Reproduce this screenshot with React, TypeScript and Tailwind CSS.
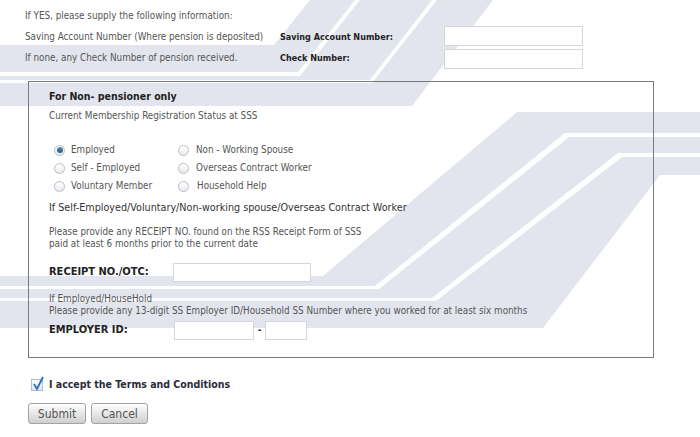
import React from "react";

const F = { fontFamily: '"DejaVu Sans Condensed", "DejaVu Sans", sans-serif' };

function Radio({ checked = false }: { checked?: boolean }) {
  return (
    <span className="inline-flex h-[11px] w-[11px] shrink-0 items-center justify-center rounded-full border border-[#b9bcc4] bg-gradient-to-b from-[#ffffff] to-[#e9eaee]">
      {checked && <span className="h-[6px] w-[6px] rounded-full bg-gradient-to-b from-[#5d8fb8] to-[#1f5a87]" />}
    </span>
  );
}

function Input({ w }: { w: string }) {
  return <div className={`${w} h-[19px] border border-[#d4d6dc] bg-white`} />;
}

function Background() {
  return (
    <svg className="absolute inset-0" width="700" height="437" viewBox="0 0 700 437">
      <g fill="#e3e5ee">
        <polygon points="0,45 274,45 310,0 355,0 298,72 0,72" />
        <polygon points="0,76 300,76 360,0 432,0 370,80 0,80" />
        <polygon points="0,83 372,83 437,0 493,0 412,106 0,106" />
        <polygon points="0,276 323,276 517,112 700,112 700,133 565,133 375,286 0,286" />
        <polygon points="0,289 379,289 569,137 700,137 700,153 618,153 432,298 0,298" />
        <polygon points="0,301 436,301 622,157 700,157 700,175 660,175 543,328 0,328" />
      </g>
    </svg>
  );
}

export default function App() {
  return (
    <div className="relative h-[437px] w-[700px] overflow-hidden bg-white" style={F}>
      <Background />
      <div className="relative pl-[25px] pt-[6px] text-[9.8px] text-[#555]">
        <div className="flex h-[21px] items-center">If YES, please supply the following information:</div>
        <div className="flex h-[21px] items-center">
          <span className="w-[255px]">Saving Account Number (Where pension is deposited)</span>
          <span className="w-[164px] text-[9px] font-bold text-[#222]">Saving Account Number:</span>
          <div className="-mt-[4px] h-[20px] w-[139px] border border-[#d4d6dc] bg-white" />
        </div>
        <div className="flex h-[21px] items-center">
          <span className="w-[255px]">If none, any Check Number of pension received.</span>
          <span className="w-[164px] text-[9px] font-bold text-[#222]">Check Number:</span>
          <div className="h-[20px] w-[139px] border border-[#d4d6dc] bg-white" />
        </div>

        <div className="ml-[3px] mt-[12px] h-[277px] w-[626px] border border-[#7a7a7a] pl-[20px]">
          <div className="mt-[7px] flex h-[16px] items-center text-[10.5px] font-bold text-[#222]">For Non- pensioner only</div>
          <div className="mt-[4px] flex h-[14px] items-center">Current Membership Registration Status at SSS</div>
          <div className="mt-[18px] flex">
            <div className="flex w-[129px] flex-col pl-[5px]">
              <div className="flex h-[18px] items-center gap-[6px]"><Radio checked />Employed</div>
              <div className="flex h-[18px] items-center gap-[6px]"><Radio />Self - Employed</div>
              <div className="flex h-[18px] items-center gap-[6px]"><Radio />Voluntary Member</div>
            </div>
            <div className="flex flex-col">
              <div className="flex h-[18px] items-center gap-[7px]"><Radio />Non - Working Spouse</div>
              <div className="flex h-[18px] items-center gap-[7px]"><Radio />Overseas Contract Worker</div>
              <div className="flex h-[18px] items-center gap-[8px]"><Radio />Household Help</div>
            </div>
          </div>
          <div className="mt-[6px] flex h-[14px] items-center text-[10.7px] text-[#333]">If Self-Employed/Voluntary/Non-working spouse/Overseas Contract Worker</div>
          <div className="mt-[11px] leading-[12px]">
            <div>Please provide any RECEIPT NO. found on the RSS Receipt Form of SSS</div>
            <div>paid at least 6 months prior to the current date</div>
          </div>
          <div className="mt-[12px] flex h-[20px] items-center">
            <span className="w-[124px] text-[11px] font-bold text-[#222]">RECEIPT NO./OTC:</span>
            <Input w="w-[138px]" />
          </div>
          <div className="mt-[11px] leading-[12px]">
            <div>If Employed/HouseHold</div>
            <div>Please provide any 13-digit SS Employer ID/Household SS Number where you worked for at least six months</div>
          </div>
          <div className="mt-[3px] flex h-[20px] items-center">
            <span className="w-[125px] text-[11px] font-bold text-[#222]">EMPLOYER ID:</span>
            <Input w="w-[80px]" />
            <span className="w-[11px] text-center font-bold text-[#333]">-</span>
            <Input w="w-[42px]" />
          </div>
        </div>

        <div className="ml-[6px] mt-[19px] flex h-[16px] items-center gap-[6px]">
          <span className="relative h-[12px] w-[12px] border border-[#a9bfd6] bg-gradient-to-b from-[#ffffff] to-[#dde6f0]">
            <svg className="absolute -top-[4px] left-[0px]" width="13" height="15" viewBox="0 0 13 15">
              <path d="M2 8 L5 13 L11 1" fill="none" stroke="#2a6fb5" strokeWidth="1.8" />
            </svg>
          </span>
          <span className="text-[10.5px] font-bold text-[#2a2a3a]">I accept the Terms and Conditions</span>
        </div>
        <div className="ml-[3px] mt-[10px] flex gap-[5px]">
          <button className="h-[21px] w-[58px] rounded-[3px] border border-[#a3a3a3] bg-gradient-to-b from-[#ffffff] to-[#cfcfcf] text-[12px] text-[#555]">Submit</button>
          <button className="h-[21px] w-[57px] rounded-[3px] border border-[#a3a3a3] bg-gradient-to-b from-[#ffffff] to-[#cfcfcf] text-[12px] text-[#555]">Cancel</button>
        </div>
      </div>
    </div>
  );
}
